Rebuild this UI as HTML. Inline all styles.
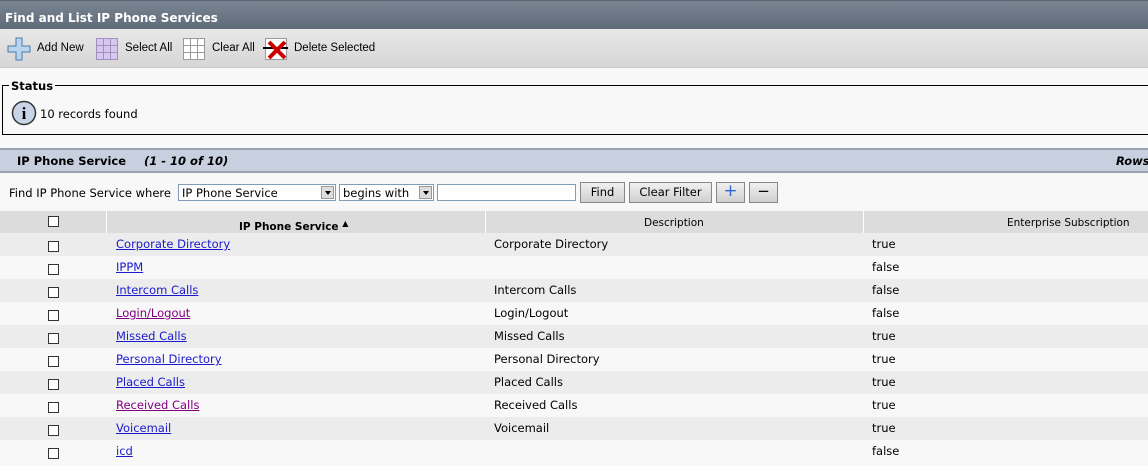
<!DOCTYPE html>
<html><head><style>
*{margin:0;padding:0;box-sizing:border-box}
body{width:1148px;height:466px;overflow:hidden;background:#f8f8f8;font-family:"DejaVu Sans","Liberation Sans",sans-serif;font-size:11px;color:#000;position:relative}
.abs{position:absolute}
.title{left:0;top:0;width:1148px;height:29px;background:linear-gradient(#7a8594,#606b7a);border-top:1px solid #5a6470}
.title span{position:absolute;left:5px;top:10px;color:#fff;font-weight:bold;font-size:12px;font-family:"DejaVu Sans",sans-serif}
.tool{left:0;top:29px;width:1148px;height:39px;background:linear-gradient(#e8e8e8,#d6d6d6);border-bottom:1px solid #c8c8c8}
.tool .t{position:absolute;top:13px;font-family:"Liberation Sans",sans-serif;font-size:11.5px}
.grid{position:absolute;top:9px;width:22px;height:22px;border:1px solid #999}
.fs{position:absolute;left:2px;top:85px;width:1148px;height:50px;border:1px solid #000;border-right:none}
.leg{left:9px;top:79px;background:#f8f8f8;padding:0 2px;font-weight:bold;font-size:11.5px}
.sec{left:0;top:148px;width:1148px;height:25px;background:#c8d0e0;border-top:2px solid #9aa3b2;border-bottom:2px solid #9aa3b2}
.sec b{position:absolute;top:4px}
.sel{position:absolute;top:184px;height:17px;border:1px solid #7f9db9;background:#fff;font-size:11.5px;padding:1px 3px}
.arr{position:absolute;right:1px;top:1px;width:13px;height:13px;background:#ddd;border:1px solid #999}
.arr:after{content:"";position:absolute;left:3px;top:4px;border:3px solid transparent;border-top:4px solid #000}
.btn{position:absolute;top:182px;height:21px;background:linear-gradient(#f0f0f0,#cfcfcf);border:1px solid #888;font-size:11.5px;text-align:center;line-height:19px}
.row{position:absolute;left:0;width:1148px;height:23px}
.cb{position:absolute;left:48px;width:11px;height:11px;border:1px solid #333;background:#fff}
.c{position:absolute;top:4px;font-size:11.5px}
a{color:#1a1acc;text-decoration:underline}
</style></head><body>
<div class="abs title"><span>Find and List IP Phone Services</span></div>
<div class="abs tool">
 <svg class="abs" style="left:7px;top:8px" width="24" height="24"><path d="M9 1h6v8h8v6h-8v8H9v-8H1V9h8z" fill="#b8d4ee" stroke="#4d7aa8"/></svg>
 <span class="t" style="left:37px">Add New</span>
 <div class="grid" style="left:96px;background:#d8c8f0;border-color:#a090c0;background-image:linear-gradient(90deg,transparent 6px,#a090c0 6px,#a090c0 7px,transparent 7px,transparent 13px,#a090c0 13px,#a090c0 14px,transparent 14px),linear-gradient(transparent 6px,#a090c0 6px,#a090c0 7px,transparent 7px,transparent 13px,#a090c0 13px,#a090c0 14px,transparent 14px)"></div>
 <span class="t" style="left:125px">Select All</span>
 <div class="grid" style="left:183px;background:#fff;background-image:linear-gradient(90deg,transparent 6px,#999 6px,#999 7px,transparent 7px,transparent 13px,#999 13px,#999 14px,transparent 14px),linear-gradient(transparent 6px,#999 6px,#999 7px,transparent 7px,transparent 13px,#999 13px,#999 14px,transparent 14px)"></div>
 <span class="t" style="left:212px">Clear All</span>
 <div class="grid" style="left:265px;background:#fff"></div>
 <svg class="abs" style="left:262px;top:8px" width="28" height="26"><line x1="1" y1="11" x2="26" y2="11" stroke="#000" stroke-width="2"/><path d="M7 5l16 16M23 5L7 21" stroke="#c00" stroke-width="4"/></svg>
 <span class="t" style="left:294px">Delete Selected</span>
</div>
<div class="fs"></div>
<div class="abs leg">Status</div>
<svg class="abs" style="left:11px;top:100px" width="26" height="26"><circle cx="13" cy="13" r="11.5" fill="#c8d4e8" stroke="#333" stroke-width="1.5"/><text x="13" y="19" text-anchor="middle" font-family="Liberation Serif" font-weight="bold" font-size="17">i</text></svg>
<div class="abs" style="left:40px;top:107px;font-size:11.5px">10 records found</div>
<div class="abs sec"><b style="left:17px;font-size:11.5px">IP Phone Service</b><b style="left:144px;font-style:italic;font-size:11.5px">(1 - 10 of 10)</b><b style="left:1116px;font-style:italic;font-size:11.5px">Rows</b></div>
<div class="abs" style="left:9px;top:186px;font-size:11.5px">Find IP Phone Service where</div>
<div class="sel" style="left:178px;width:158px">IP Phone Service<div class="arr"></div></div>
<div class="sel" style="left:339px;width:95px">begins with<div class="arr"></div></div>
<div class="sel" style="left:437px;width:139px"></div>
<div class="btn" style="left:580px;width:45px">Find</div>
<div class="btn" style="left:629px;width:83px">Clear Filter</div>
<div class="btn" style="left:716px;width:29px;color:#36c;font-size:17px;line-height:17px">+</div>
<div class="btn" style="left:749px;width:29px;font-size:15px;line-height:16px">−</div>
<div class="row" style="top:211px;height:22px;background:#dcdcdc">
 <div class="cb" style="top:5px"></div>
 <div class="abs" style="left:106px;top:0;width:1px;height:22px;background:#fff"></div>
 <div class="abs" style="left:485px;top:0;width:1px;height:22px;background:#fff"></div>
 <div class="abs" style="left:863px;top:0;width:1px;height:22px;background:#fff"></div>
 <b class="c" style="left:239px;top:8px;font-size:10.5px">IP Phone Service <span style="font-size:8px;vertical-align:4px">▲</span></b>
 <span class="c" style="left:644px;top:6px;font-size:10.5px">Description</span>
 <span class="c" style="left:1007px;top:6px;font-size:10.5px">Enterprise Subscription</span>
</div>
<div class="row" style="top:233px;background:#ececec"><div class="cb" style="top:8px"></div><a class="c" style="left:116px">Corporate Directory</a><span class="c" style="left:494px">Corporate Directory</span><span class="c" style="left:872px">true</span></div>
<div class="row" style="top:256px"><div class="cb" style="top:8px"></div><a class="c" style="left:116px">IPPM</a><span class="c" style="left:872px">false</span></div>
<div class="row" style="top:279px;background:#ececec"><div class="cb" style="top:8px"></div><a class="c" style="left:116px">Intercom Calls</a><span class="c" style="left:494px">Intercom Calls</span><span class="c" style="left:872px">false</span></div>
<div class="row" style="top:302px"><div class="cb" style="top:8px"></div><a class="c" style="left:116px;color:#800080">Login/Logout</a><span class="c" style="left:494px">Login/Logout</span><span class="c" style="left:872px">false</span></div>
<div class="row" style="top:325px;background:#ececec"><div class="cb" style="top:8px"></div><a class="c" style="left:116px">Missed Calls</a><span class="c" style="left:494px">Missed Calls</span><span class="c" style="left:872px">true</span></div>
<div class="row" style="top:348px"><div class="cb" style="top:8px"></div><a class="c" style="left:116px">Personal Directory</a><span class="c" style="left:494px">Personal Directory</span><span class="c" style="left:872px">true</span></div>
<div class="row" style="top:371px;background:#ececec"><div class="cb" style="top:8px"></div><a class="c" style="left:116px">Placed Calls</a><span class="c" style="left:494px">Placed Calls</span><span class="c" style="left:872px">true</span></div>
<div class="row" style="top:394px"><div class="cb" style="top:8px"></div><a class="c" style="left:116px;color:#800080">Received Calls</a><span class="c" style="left:494px">Received Calls</span><span class="c" style="left:872px">true</span></div>
<div class="row" style="top:417px;background:#ececec"><div class="cb" style="top:8px"></div><a class="c" style="left:116px">Voicemail</a><span class="c" style="left:494px">Voicemail</span><span class="c" style="left:872px">true</span></div>
<div class="row" style="top:440px"><div class="cb" style="top:8px"></div><a class="c" style="left:116px">icd</a><span class="c" style="left:872px">false</span></div>
</body></html>
